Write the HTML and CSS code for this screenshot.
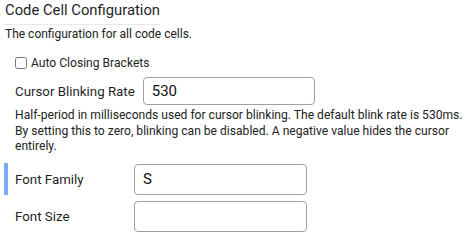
FILE: index.html
```html
<!DOCTYPE html>
<html lang="en">

<head>
    <meta charset="UTF-8">
    <title>Code Cell Configuration</title>
    <link rel="stylesheet" href="styles.css">
</head>

<body>
    <form class="settings-form">
        <h2 class="section-title">Code Cell Configuration</h2>
        <p class="section-desc">The configuration for all code cells.</p>

        <div class="field field-check">
            <input type="checkbox" id="autoClosingBrackets">
            <label for="autoClosingBrackets">Auto Closing Brackets</label>
        </div>

        <div class="field field-row">
            <label for="cursorBlinkRate">Cursor Blinking Rate</label>
            <input type="text" id="cursorBlinkRate" class="text-input" value="530">
        </div>
        <p class="field-desc">Half-period in milliseconds used for cursor blinking. The default blink rate is 530ms. By setting this to zero, blinking can be disabled. A negative value hides the cursor entirely.</p>

        <!-- modified field gets the blue marker -->
        <div class="field field-grid modified">
            <label for="fontFamily">Font Family</label>
            <input type="text" id="fontFamily" class="text-input" value="S">
        </div>

        <div class="field field-grid">
            <label for="fontSize">Font Size</label>
            <input type="text" id="fontSize" class="text-input">
        </div>
    </form>
</body>

</html>
```

FILE: styles.css
```css
body {
    margin: 0;
    background-color: white;
    color: #1f1f1f;
    font-family: Roboto, "Liberation Sans", sans-serif;
}

.settings-form {
    padding: 0 0 0 4px;
}

.section-title {
    display: inline-block;
    margin: 0;
    padding: 0 0 4px 1px;
    font-size: 14.8px;
    line-height: 20px;
    font-weight: normal;
    border-bottom: 1px solid #e8e8e8;
}

.section-desc {
    margin: 1px 0 0 1px;
    font-size: 12px;
    line-height: 16px;
    color: #222;
}

.field {
    position: relative;
    padding-left: 11px;
    font-size: 13.3px;
}

.field-check {
    display: flex;
    align-items: center;
    margin-top: 13px;
    font-size: 12.1px;
    line-height: 16px;
}

.field-check input {
    width: 12px;
    height: 12px;
    margin: 0 4px 0 0;
}

.field-row {
    display: flex;
    align-items: center;
    gap: 8px;
    margin-top: 6px;
}

.text-input {
    width: 172px;
    height: 28px;
    box-sizing: border-box;
    padding: 0 8px;
    border: 1px solid #a0a0a0;
    border-radius: 4px;
    font-family: inherit;
    font-size: 15px;
    color: #111;
}

.field-desc {
    margin: 3px 6px 0 11px;
    font-size: 12.1px;
    line-height: 15.5px;
    color: #222;
}

.field-grid {
    display: grid;
    grid-template-columns: 119px 173px;
    align-items: center;
    margin-top: 6px;
}

.field-desc + .field-grid {
    margin-top: 9px;
}

.field-grid .text-input {
    width: 173px;
    height: 31px;
}

.modified::before {
    content: "";
    position: absolute;
    left: 0;
    top: -1px;
    width: 4px;
    height: 32px;
    background-color: #78aef0;
}
```
